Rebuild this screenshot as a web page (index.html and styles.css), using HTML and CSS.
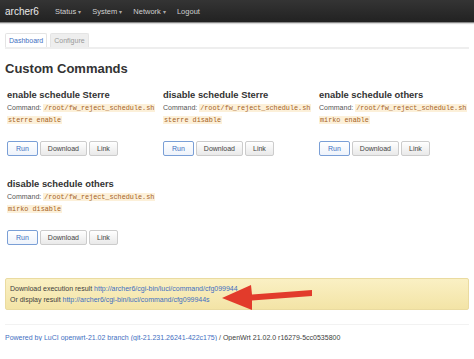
FILE: index.html
```html
<!DOCTYPE html>
<html lang="en">
<head>
  <meta charset="UTF-8" />
  <title>archer6 - Custom Commands - LuCI</title>
  <link rel="stylesheet" href="styles.css">
</head>
<body>

<div class="topbar">
  <span class="brand">archer6</span>
  <ul class="nav">
    <li>Status <span class="caret">▾</span></li>
    <li>System <span class="caret">▾</span></li>
    <li>Network <span class="caret">▾</span></li>
    <li>Logout</li>
  </ul>
</div>

<div class="main">
  <ul class="tabs">
    <li class="tab active">Dashboard</li>
    <li class="tab">Configure</li>
  </ul>

  <h2 class="page-title">Custom Commands</h2>

  <div class="commands">
    <div class="command">
      <h3>enable schedule Sterre</h3>
      <p class="cmdline">Command: <code>/root/fw_reject_schedule.sh</code> <code>sterre enable</code></p>
      <div class="actions">
        <button class="btn primary">Run</button>
        <button class="btn">Download</button>
        <button class="btn">Link</button>
      </div>
    </div>
    <div class="command">
      <h3>disable schedule Sterre</h3>
      <p class="cmdline">Command: <code>/root/fw_reject_schedule.sh</code> <code>sterre disable</code></p>
      <div class="actions">
        <button class="btn primary">Run</button>
        <button class="btn">Download</button>
        <button class="btn">Link</button>
      </div>
    </div>
    <div class="command">
      <h3>enable schedule others</h3>
      <p class="cmdline">Command: <code>/root/fw_reject_schedule.sh</code> <code>mirko enable</code></p>
      <div class="actions">
        <button class="btn primary">Run</button>
        <button class="btn">Download</button>
        <button class="btn">Link</button>
      </div>
    </div>
    <div class="command">
      <h3>disable schedule others</h3>
      <p class="cmdline">Command: <code>/root/fw_reject_schedule.sh</code> <code>mirko disable</code></p>
      <div class="actions">
        <button class="btn primary">Run</button>
        <button class="btn">Download</button>
        <button class="btn">Link</button>
      </div>
    </div>
  </div>

  <div class="alert">
    <p>Download execution result <a href="#">http://archer6/cgi-bin/luci/command/cfg099944</a></p>
    <p>Or display result <a href="#">http://archer6/cgi-bin/luci/command/cfg099944s</a></p>
    <svg class="arrow" width="96" height="32" viewBox="0 0 96 32">
      <path d="M92 9 L32 13.5 L31 4 L2 17 L32 29 L32 19.5 L92 15 Z" fill="#e23b2b"/>
    </svg>
  </div>

  <footer class="footer">
    <a href="#">Powered by LuCI openwrt-21.02 branch (git-21.231.26241-422c175)</a> / OpenWrt 21.02.0 r16279-5cc0535800
  </footer>
</div>

</body>
</html>
```

FILE: styles.css
```css
/* base */
body {
  margin: 0;
  font-family: 'Liberation Sans', Arial, sans-serif;
  color: #404040;
  background: #fff;
}

a {
  color: #3f6fc2;
  text-decoration: none;
}

/* top bar */
.topbar {
  display: flex;
  align-items: center;
  height: 22px;
  padding: 0 5px;
  background: linear-gradient(#343434, #222);
  border-bottom: 1px solid #888;
  box-shadow: 0 1px 1px rgba(0,0,0,0.15);
}

.brand {
  font-size: 10px;
  color: #e8e8e8;
  margin-right: 16px;
}

.nav {
  display: flex;
  gap: 11px;
  margin: 0;
  padding: 0;
  list-style: none;
  font-size: 7.5px;
  color: #cfcfcf;
}

.caret {
  font-size: 6px;
  color: #aaa;
}

/* content */
.main {
  padding: 0 5px;
}

.tabs {
  display: flex;
  gap: 3px;
  margin: 10px 0 0;
  padding: 0;
  list-style: none;
  border-bottom: 2px solid #eee;
}

.tab {
  font-size: 7px;
  line-height: 13px;
  padding: 0 3px;
  color: #999;
  background: #eee;
  border: 1px solid #e4e4e4;
  border-bottom: none;
  border-radius: 2px 2px 0 0;
}

.tab.active {
  color: #3f6fc2;
  background: #fff;
}

.page-title {
  font-size: 13px;
  color: #333;
  margin: 12px 0 0;
  line-height: 15px;
}

/* command cards */
.commands {
  display: grid;
  grid-template-columns: repeat(3, 151px);
  column-gap: 5px;
  row-gap: 22px;
  padding: 13px 2px 0;
}

.command h3 {
  font-size: 9.4px;
  line-height: 12px;
  color: #333;
  margin: 0;
}

.cmdline {
  font-size: 7px;
  line-height: 11px;
  margin: 1px 0 0;
  height: 22px;
  color: #555;
}

.cmdline code {
  font-family: 'Liberation Mono', 'Courier New', monospace;
  font-size: 6.8px;
  color: #a5621f;
  background: #fcf0d9;
  padding: 0 1px;
}

.actions {
  display: flex;
  gap: 2px;
  margin-top: 17px;
}

.btn {
  font-family: 'Liberation Sans', Arial, sans-serif;
  font-size: 7px;
  height: 15px;
  padding: 0 7px;
  color: #444;
  background: linear-gradient(#fff, #e9e9e9);
  border: 1px solid #ccc;
  border-radius: 2px;
}

.btn.primary {
  color: #3f6fc2;
  background: linear-gradient(#fff, #eef3fb);
  border-color: #7a9fd6;
  padding: 0 8px;
}

/* result box */
.alert {
  position: relative;
  margin-top: 33px;
  padding: 4px 4px;
  background: linear-gradient(#faf0c4, #f3e4a6);
  border: 1px solid #eadba0;
  border-radius: 2px;
  font-size: 7px;
  line-height: 11px;
  color: #404040;
}

.alert p {
  margin: 0;
}

.arrow {
  position: absolute;
  left: 214px;
  top: 2px;
}

/* footer */
.footer {
  margin-top: 14px;
  padding-top: 9px;
  border-top: 1px solid #f2f2f2;
  font-size: 7px;
  color: #404040;
}
```
